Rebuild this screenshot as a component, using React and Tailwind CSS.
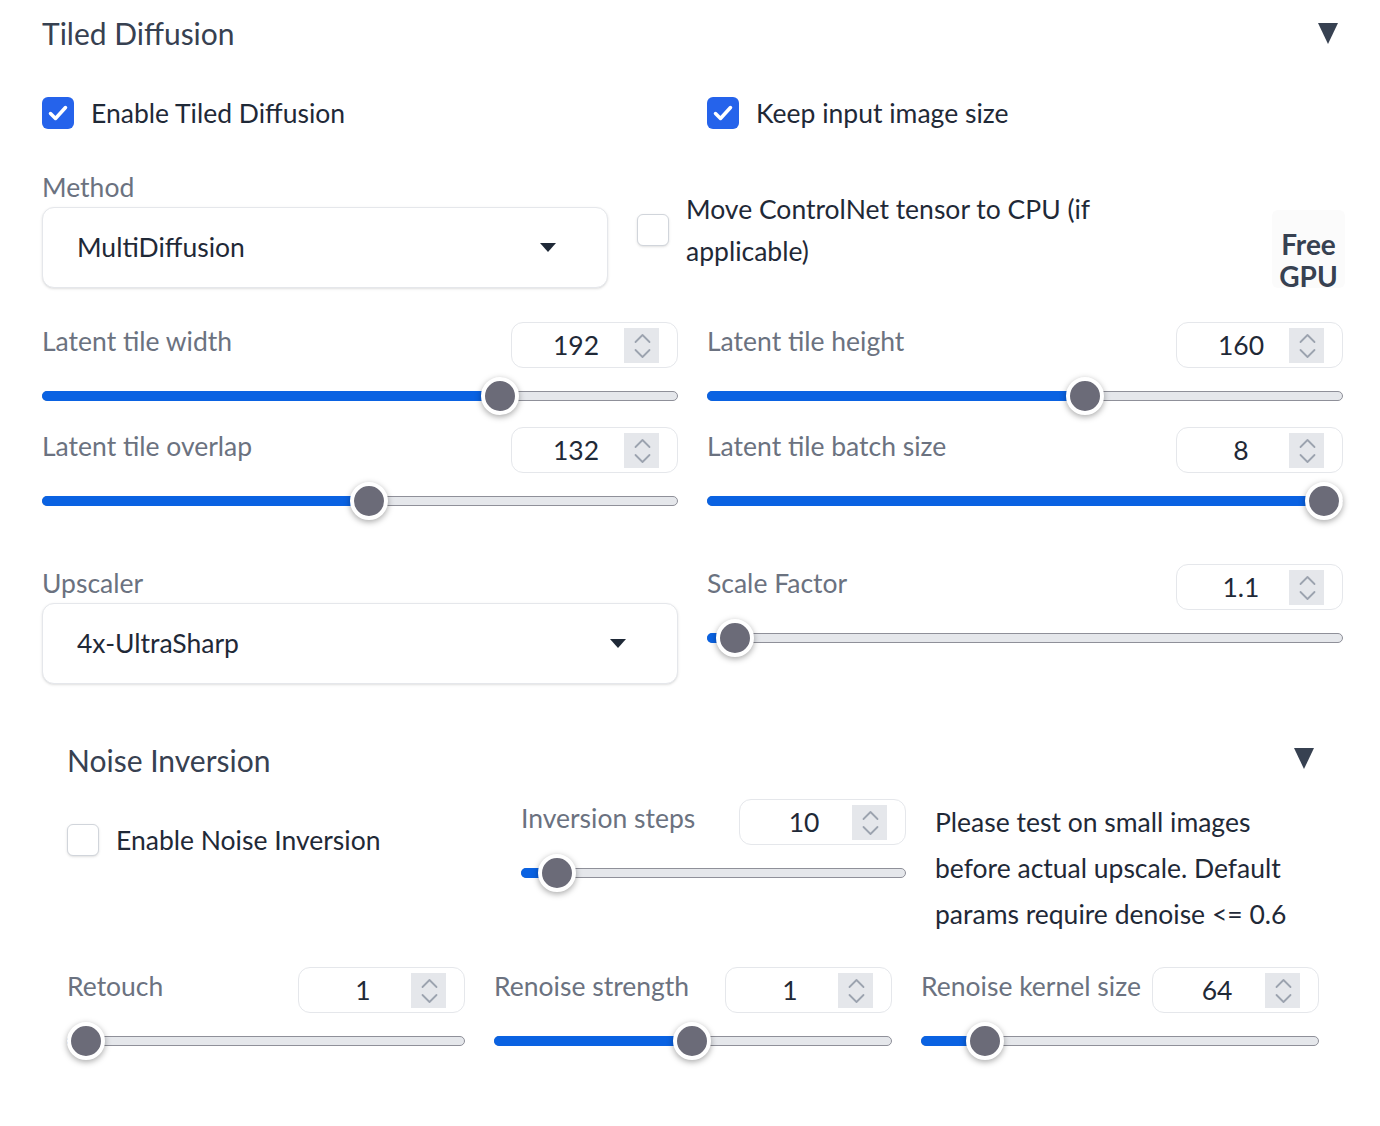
const FONT = { fontFamily: 'Lato, "Noto Sans", sans-serif' };

function Caret({ className }) {
  return (
    <svg viewBox="0 0 20 21" className={className}>
      <polygon points="0,0 20,0 10,21" fill="currentColor" />
    </svg>
  );
}

function Checkbox({ checked, label, className = '' }) {
  return (
    <label className={`flex items-center gap-[17px] ${className}`}>
      {checked ? (
        <span className="flex h-[32px] w-[32px] shrink-0 items-center justify-center rounded-[6px] bg-[#2563eb]">
          <svg viewBox="0 0 32 32" className="h-[32px] w-[32px]">
            <path d="M8.5 16.5l5 5 10-11" fill="none" stroke="white" strokeWidth="3.5" strokeLinecap="round" strokeLinejoin="round" />
          </svg>
        </span>
      ) : (
        <span className="h-[32px] w-[32px] shrink-0 rounded-[6px] border-[1.5px] border-[#d1d5db] bg-white shadow-sm" />
      )}
      <span className="text-[26.5px] leading-[42px] text-[#1f2937]">{label}</span>
    </label>
  );
}

function NumberBox({ value }) {
  return (
    <div className="flex h-[46px] w-[167px] shrink-0 items-center rounded-[12px] border-[1.5px] border-[#e5e7eb] bg-white">
      <div className="w-[112px] pl-4 text-center text-[26.5px] leading-none text-[#1f2937]">{value}</div>
      <div className="h-[35px] w-[35px] bg-[#e5e7eb]">
        <svg viewBox="0 0 35 35" className="h-[35px] w-[35px]">
          <path d="M11.5 14l7-7 7 7M11.5 22l7 7 7-7" fill="none" stroke="#9ca3af" strokeWidth="1.8" strokeLinecap="round" strokeLinejoin="round" />
        </svg>
      </div>
    </div>
  );
}

function Slider({ frac }) {
  const pos = `calc(19px + ${frac} * (100% - 38px))`;
  return (
    <div className="relative flex h-[38px] items-center">
      <div className="h-[10px] w-full rounded-full border-[1.5px] border-[#8f9099] bg-[#e5e7eb]" />
      <div className="absolute left-0 h-[10px] rounded-l-full bg-[#0a62e2]" style={{ width: pos }} />
      <div
        className="absolute h-[38px] w-[38px] -translate-x-1/2 rounded-full border-[4px] border-white bg-[#6b6b78] shadow-[0_2px_6px_rgba(0,0,0,0.35)]"
        style={{ left: pos }}
      />
    </div>
  );
}

function SliderBlock({ label, value, frac }) {
  return (
    <div>
      <div className="flex items-start justify-between gap-2">
        <span className="text-[26.5px] leading-[38px] text-[#6b7280] whitespace-nowrap">{label}</span>
        <NumberBox value={value} />
      </div>
      <div className="mt-[9px]">
        <Slider frac={frac} />
      </div>
    </div>
  );
}

function Dropdown({ value, className = '' }) {
  return (
    <div className={`flex h-[81px] items-center justify-between rounded-[12px] border-[1.5px] border-[#e5e7eb] bg-white pl-[34px] pr-[51px] shadow-sm ${className}`}>
      <span className="text-[26.5px] text-[#1f2937]">{value}</span>
      <svg viewBox="0 0 16 9" className="h-[9px] w-[16px]">
        <polygon points="0,0 16,0 8,9" fill="#1f2937" />
      </svg>
    </div>
  );
}

export default function App() {
  return (
    <div className="min-h-screen bg-white px-[37px] pt-[14px] pb-10" style={FONT}>
      <div className="pl-[5px]">
        {/* header */}
        <div className="flex h-[38px] items-center justify-between">
          <h2 className="text-[30px] leading-[38px] text-[#374151]">Tiled Diffusion</h2>
          <Caret className="mr-[5px] h-[21px] w-[20px] text-[#374151]" />
        </div>

        {/* enable row */}
        <div className="mt-[40px] grid h-[42px] grid-cols-2 gap-[29px]">
          <Checkbox checked label="Enable Tiled Diffusion" />
          <Checkbox checked label="Keep input image size" />
        </div>

        {/* method row */}
        <div className="mt-[34px] flex h-[127px] items-start">
          <div className="w-[566px] shrink-0">
            <div className="text-[26.5px] leading-[38px] text-[#6b7280]">Method</div>
            <Dropdown value="MultiDiffusion" className="mt-[1px]" />
          </div>
          <div className="ml-[29px] mt-[20px]">
            <label className="flex items-center gap-[17px]">
              <span className="h-[32px] w-[32px] shrink-0 rounded-[6px] border-[1.5px] border-[#d1d5db] bg-white shadow-sm" />
              <span className="w-[420px] text-[26.5px] leading-[42px] text-[#1f2937]">
                Move ControlNet tensor to CPU (if applicable)
              </span>
            </label>
          </div>
          <button className="ml-auto mt-[42px] mr-[-2px] flex h-[78px] w-[73px] items-center justify-center rounded-[6px] bg-[#fbfbfb] pt-[22px] text-[28px] font-bold leading-[32px] text-[#374151]">
            Free<br />GPU
          </button>
        </div>

        {/* sliders */}
        <div className="mt-[27px] grid grid-cols-2 gap-x-[29px] gap-y-[12px]">
          <SliderBlock label="Latent tile width" value="192" frac={0.7333} />
          <SliderBlock label="Latent tile height" value="160" frac={0.6} />
          <SliderBlock label="Latent tile overlap" value="132" frac={0.5156} />
          <SliderBlock label="Latent tile batch size" value="8" frac={1} />
        </div>

        {/* upscaler */}
        <div className="mt-[44px] grid grid-cols-2 gap-x-[29px]">
          <div>
            <div className="text-[26.5px] leading-[38px] text-[#6b7280]">Upscaler</div>
            <Dropdown value="4x-UltraSharp" className="mt-[1px]" />
          </div>
          <SliderBlock label="Scale Factor" value="1.1" frac={0.0143} />
        </div>

        {/* noise inversion */}
        <div className="mt-[57px] pl-[25px] pr-[24px]">
          <div className="flex h-[38px] items-center justify-between">
            <h3 className="text-[30px] leading-[38px] text-[#374151]">Noise Inversion</h3>
            <Caret className="mr-[5px] mt-[-4px] h-[21px] w-[20px] text-[#374151]" />
          </div>

          <div className="mt-[20px] flex items-start gap-[29px]">
            <div className="w-[425px] shrink-0 pt-[20px]">
              <Checkbox label="Enable Noise Inversion" />
            </div>
            <div className="w-[385px] shrink-0">
              <SliderBlock label="Inversion steps" value="10" frac={0.049} />
            </div>
            <p className="w-[384px] shrink-0 text-[26.5px] leading-[46px] text-[#1f2937]">
              Please test on small images before actual upscale. Default params require denoise &lt;= 0.6
            </p>
          </div>

          <div className="mt-[30px] grid grid-cols-3 gap-x-[29px]">
            <SliderBlock label="Retouch" value="1" frac={0} />
            <SliderBlock label="Renoise strength" value="1" frac={0.497} />
            <SliderBlock label="Renoise kernel size" value="64" frac={0.125} />
          </div>
        </div>
      </div>
    </div>
  );
}
